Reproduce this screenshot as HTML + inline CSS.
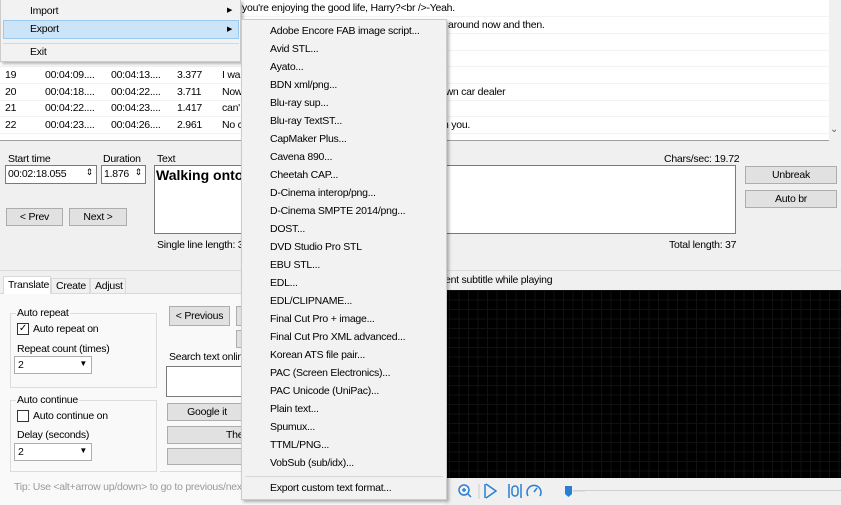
<!DOCTYPE html>
<html><head><meta charset="utf-8"><style>
*{box-sizing:border-box;margin:0;padding:0}
body{width:841px;height:505px;overflow:hidden;background:#f0f0f0;font-family:"Liberation Sans",sans-serif;font-size:10.5px;letter-spacing:-0.25px;color:#000;position:relative}
.a{position:absolute;white-space:nowrap}
.btn{position:absolute;background:#e1e1e1;border:1px solid #adadad;text-align:center;line-height:16px}
.inp{position:absolute;background:#fff;border:1px solid #7a7a7a}
.grp{position:absolute;border:1px solid #dcdcdc}
.row{position:absolute;left:0;width:829px;height:17px;border-bottom:1px solid #f3f3f3}
.row span{position:absolute;top:2px}
.mi{position:absolute;left:28px}
</style></head><body>
<!-- grid -->
<div class="a" style="left:0;top:0;width:841px;height:141px;background:#fff;border-bottom:1px solid #a0a0a0"></div>
<div class="a" style="left:829px;top:0;width:12px;height:141px;background:#f0f0f0"></div>
<div class="a" style="left:830px;top:124px;font-size:10px;color:#606060">&#8964;</div>
<div class="row" style="top:0"><span style="left:242px">you're enjoying the good life, Harry?&lt;br /&gt;-Yeah.</span></div>
<div class="row" style="top:17px"><span style="left:448px">around now and then.</span></div>
<div class="row" style="top:34px"></div>
<div class="row" style="top:50px"></div>
<div class="row" style="top:67px"><span style="left:5px">19</span><span style="left:45px">00:04:09....</span><span style="left:111px">00:04:13....</span><span style="left:177px">3.377</span><span style="left:222px">I wa</span></div>
<div class="row" style="top:84px"><span style="left:5px">20</span><span style="left:45px">00:04:18....</span><span style="left:111px">00:04:22....</span><span style="left:177px">3.711</span><span style="left:222px">Now</span><span style="left:440px">own car dealer</span></div>
<div class="row" style="top:100px"><span style="left:5px">21</span><span style="left:45px">00:04:22....</span><span style="left:111px">00:04:23....</span><span style="left:177px">1.417</span><span style="left:222px">can'</span></div>
<div class="row" style="top:117px"><span style="left:5px">22</span><span style="left:45px">00:04:23....</span><span style="left:111px">00:04:26....</span><span style="left:177px">2.961</span><span style="left:222px">No c</span><span style="left:443px">h you.</span></div>
<!-- edit -->
<div class="a" style="left:8px;top:153px">Start time</div>
<div class="a" style="left:103px;top:153px">Duration</div>
<div class="a" style="left:157px;top:153px">Text</div>
<div class="a" style="left:664px;top:153px">Chars/sec: 19.72</div>
<div class="inp" style="left:5px;top:165px;width:92px;height:19px"><span class="a" style="left:2px;top:2px">00:02:18.055</span><span class="a" style="right:3px;top:1px;font-size:9px">&#8661;</span></div>
<div class="inp" style="left:101px;top:165px;width:45px;height:19px"><span class="a" style="left:2px;top:2px">1.876</span><span class="a" style="right:3px;top:1px;font-size:9px">&#8661;</span></div>
<div class="inp" style="left:154px;top:165px;width:582px;height:69px"><span class="a" style="left:1px;top:1px;font-weight:bold;font-size:14px;letter-spacing:0">Walking onto</span></div>
<div class="btn" style="left:745px;top:166px;width:92px;height:18px">Unbreak</div>
<div class="btn" style="left:745px;top:190px;width:92px;height:18px">Auto br</div>
<div class="btn" style="left:6px;top:208px;width:57px;height:18px">&lt; Prev</div>
<div class="btn" style="left:69px;top:208px;width:58px;height:18px">Next &gt;</div>
<div class="a" style="left:157px;top:239px">Single line length: 3</div>
<div class="a" style="left:669px;top:239px">Total length: 37</div>
<div class="a" style="left:0;top:270px;width:841px;height:1px;background:#dcdcdc"></div>
<!-- tabs -->
<div class="a" style="left:0;top:293px;width:445px;height:212px;background:#f9f9f9;border-top:1px solid #d9d9d9"></div>
<div class="a" style="left:3px;top:276px;width:48px;height:18px;background:#fff;border:1px solid #d9d9d9;border-bottom:none;padding:2px 0 0 4px">Translate</div>
<div class="a" style="left:51px;top:278px;width:39px;height:16px;border:1px solid #d9d9d9;padding:1px 0 0 4px">Create</div>
<div class="a" style="left:90px;top:278px;width:36px;height:16px;border:1px solid #d9d9d9;padding:1px 0 0 4px">Adjust</div>
<div class="grp" style="left:10px;top:313px;width:147px;height:75px"></div>
<div class="a" style="left:16px;top:307px;background:#f9f9f9;padding:0 1px">Auto repeat</div>
<div class="a" style="left:17px;top:323px;width:12px;height:12px;border:1px solid #333;background:#fff;font-size:10px;line-height:10px;text-align:center">&#10003;</div>
<div class="a" style="left:33px;top:323px">Auto repeat on</div>
<div class="a" style="left:17px;top:343px">Repeat count (times)</div>
<div class="inp" style="left:14px;top:356px;width:78px;height:18px;border-color:#adadad"><span class="a" style="left:3px;top:2px">2</span><span class="a" style="right:4px;top:2px;font-size:8px">&#9660;</span></div>
<div class="grp" style="left:10px;top:400px;width:147px;height:72px"></div>
<div class="a" style="left:16px;top:394px;background:#f9f9f9;padding:0 1px">Auto continue</div>
<div class="a" style="left:17px;top:410px;width:12px;height:12px;border:1px solid #333;background:#fff"></div>
<div class="a" style="left:33px;top:410px">Auto continue on</div>
<div class="a" style="left:17px;top:429px">Delay (seconds)</div>
<div class="inp" style="left:14px;top:443px;width:78px;height:18px;border-color:#adadad"><span class="a" style="left:3px;top:2px">2</span><span class="a" style="right:4px;top:2px;font-size:8px">&#9660;</span></div>
<div class="grp" style="left:160px;top:300px;width:90px;height:172px;border-left:none;border-top:none"></div>
<div class="btn" style="left:169px;top:306px;width:61px;height:20px;line-height:18px">&lt; Previous</div>
<div class="btn" style="left:236px;top:306px;width:10px;height:20px"></div>
<div class="btn" style="left:236px;top:330px;width:10px;height:18px"></div>
<div class="a" style="left:169px;top:351px">Search text online</div>
<div class="inp" style="left:166px;top:366px;width:80px;height:31px"></div>
<div class="btn" style="left:167px;top:403px;width:80px;height:18px">Google it</div>
<div class="btn" style="left:167px;top:426px;width:80px;height:18px;text-align:left;padding-left:58px">The</div>
<div class="btn" style="left:167px;top:448px;width:80px;height:17px"></div>
<div class="a" style="left:14px;top:481px;color:#9a9a9a">Tip: Use &lt;alt+arrow up/down&gt; to go to previous/next</div>
<!-- video -->
<div class="a" style="left:445px;top:274px">ent subtitle while playing</div>
<div class="a" style="left:430px;top:290px;width:411px;height:188px;background:#000;background-image:linear-gradient(90deg,#111 1px,transparent 1px),linear-gradient(#111 1px,transparent 1px);background-size:9.5px 9.5px"></div>
<svg class="a" style="left:445px;top:481px" width="140" height="20" viewBox="0 0 140 20">
<g fill="none" stroke="#2a7fd4" stroke-width="1.5">
<circle cx="19" cy="9" r="5"/><path d="M17 9h4M19 7v4M23 13l3 3"/>
<path d="M40 3v14M41 3l10 7-10 7"/>
<path d="M64 3v14M76 3v14"/><rect x="67" y="5" width="6" height="10" rx="3"/>
<path d="M83 15a7 7 0 1 1 12 0"/><path d="M89 11l3-4"/>
</g>
<path d="M34 3v15" stroke="#ccc"/>
<path d="M120 5h7v8l-3.5 3-3.5-3z" fill="#2a7fd4"/>
<path d="M128 10h12" stroke="#ccc"/>
</svg>
<div class="a" style="left:573px;top:490px;width:268px;height:1px;background:#d0d0d0"></div>
<!-- file menu -->
<div class="a" style="left:0;top:0;width:241px;height:62px;background:#f2f2f2;border:1px solid #ccc;border-top:none;box-shadow:2px 2px 3px rgba(0,0,0,.3)"></div>
<div class="a" style="left:30px;top:5px">Import</div><div class="a" style="left:227px;top:6px;font-size:7px">&#9654;</div>
<div class="a" style="left:3px;top:20px;width:236px;height:19px;background:#cce4f7;border:1px solid #99c9ef"></div>
<div class="a" style="left:30px;top:23px">Export</div><div class="a" style="left:227px;top:25px;font-size:7px">&#9654;</div>
<div class="a" style="left:3px;top:43px;width:236px;height:1px;background:#d7d7d7"></div>
<div class="a" style="left:30px;top:46px">Exit</div>
<!-- submenu -->
<div class="a" style="left:241px;top:19px;width:206px;height:481px;background:#f2f2f2;border:1px solid #ccc;box-shadow:2px 2px 3px rgba(0,0,0,.3)">
<div class="mi" style="top:5px">Adobe Encore FAB image script...</div>
<div class="mi" style="top:23px">Avid STL...</div>
<div class="mi" style="top:41px">Ayato...</div>
<div class="mi" style="top:59px">BDN xml/png...</div>
<div class="mi" style="top:77px">Blu-ray sup...</div>
<div class="mi" style="top:95px">Blu-ray TextST...</div>
<div class="mi" style="top:113px">CapMaker Plus...</div>
<div class="mi" style="top:131px">Cavena 890...</div>
<div class="mi" style="top:149px">Cheetah CAP...</div>
<div class="mi" style="top:167px">D-Cinema interop/png...</div>
<div class="mi" style="top:185px">D-Cinema SMPTE 2014/png...</div>
<div class="mi" style="top:203px">DOST...</div>
<div class="mi" style="top:221px">DVD Studio Pro STL</div>
<div class="mi" style="top:239px">EBU STL...</div>
<div class="mi" style="top:257px">EDL...</div>
<div class="mi" style="top:275px">EDL/CLIPNAME...</div>
<div class="mi" style="top:293px">Final Cut Pro + image...</div>
<div class="mi" style="top:311px">Final Cut Pro XML advanced...</div>
<div class="mi" style="top:329px">Korean ATS file pair...</div>
<div class="mi" style="top:347px">PAC (Screen Electronics)...</div>
<div class="mi" style="top:365px">PAC Unicode (UniPac)...</div>
<div class="mi" style="top:383px">Plain text...</div>
<div class="mi" style="top:401px">Spumux...</div>
<div class="mi" style="top:419px">TTML/PNG...</div>
<div class="mi" style="top:437px">VobSub (sub/idx)...</div>
<div class="a" style="left:3px;top:456px;width:198px;height:1px;background:#d7d7d7"></div>
<div class="mi" style="top:462px">Export custom text format...</div>
</div>
</body></html>
